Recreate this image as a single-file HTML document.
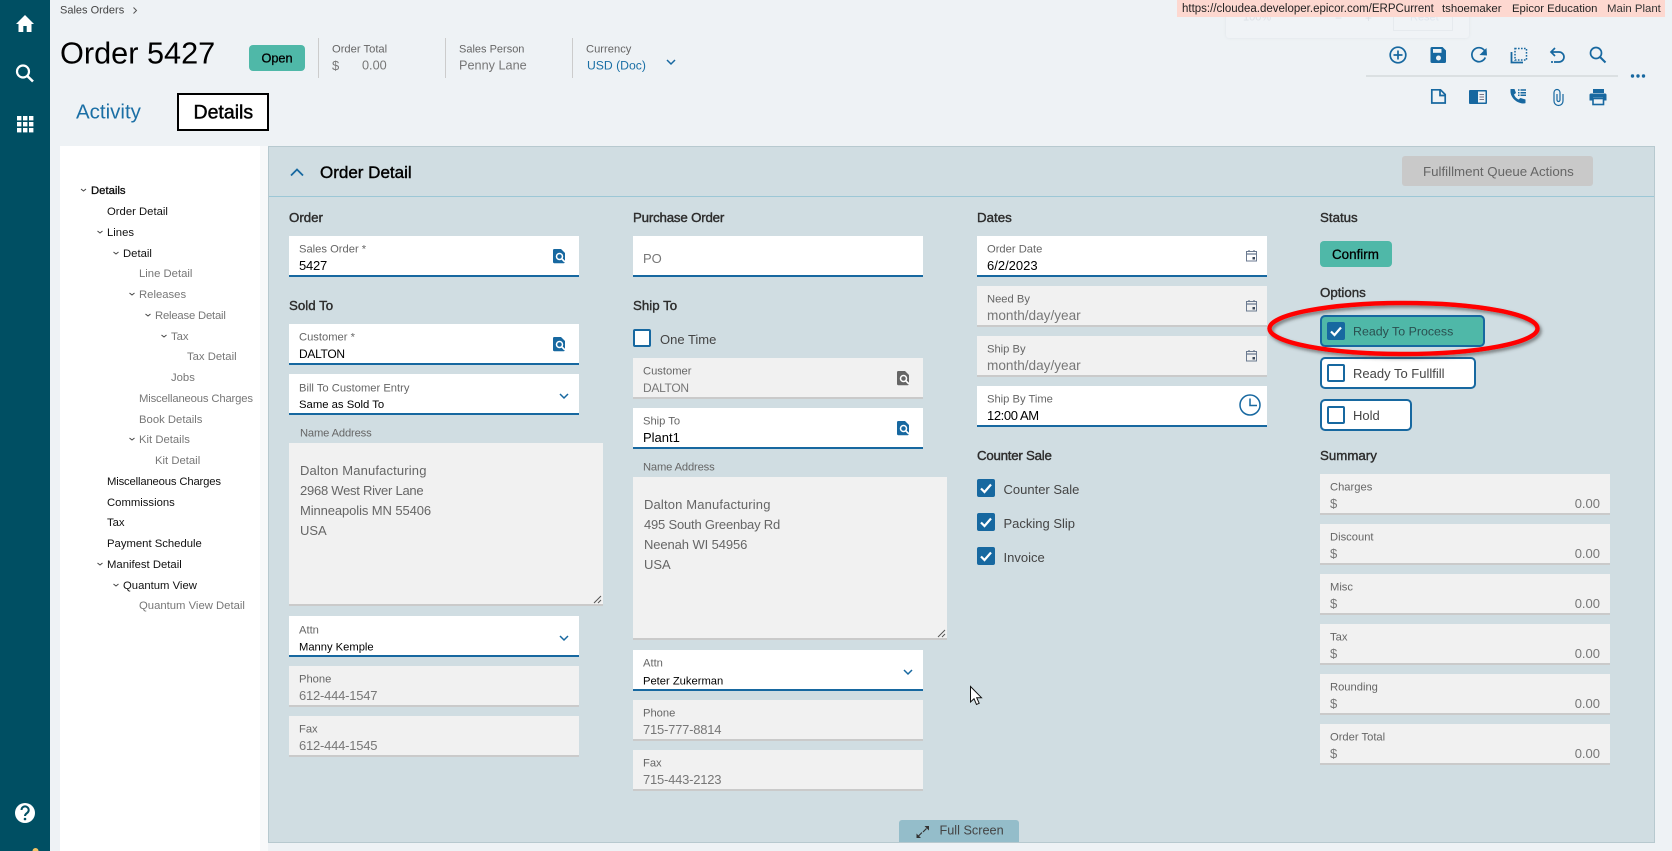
<!DOCTYPE html>
<html><head><meta charset="utf-8"><title>Order 5427</title>
<style>
*{box-sizing:border-box}
html,body{margin:0;padding:0}
body{width:1672px;height:851px;overflow:hidden;position:relative;background:#eef2f5;font-family:"Liberation Sans",sans-serif;color:#333}
.a{position:absolute}
.t{position:absolute;white-space:nowrap;transform:translateY(calc(-50% + 1px));line-height:1.2}
.l{font-size:11.2px;color:#666}
.v{font-size:13px;color:#777}
.k{color:#000}
.h{font-size:13.3px;color:#2d2d2d;-webkit-text-stroke:.4px #2d2d2d;margin-top:1px}
.n{font-size:11.3px;color:#111;margin-top:.7px}
.g{color:#777}
.f{position:absolute;width:290px;height:41px;background:#fff;border-bottom:2px solid #1768a0}
.d{background:#f1f1f1;border-bottom:2px solid #cacaca}
.f .t{left:10px}
.f .l{top:13px}
.f .v{top:29px}
.cb{position:absolute;width:18px;height:18px;border:2px solid #1768a0;border-radius:2px;background:#fff}
.on{background:#1768a0}
.cb svg{position:absolute;left:-2px;top:-2px}
.ta{position:absolute;width:314px;background:#f1f1f1;border-bottom:2px solid #cacaca}
.r{position:absolute;right:10px;left:auto!important;top:29px;font-size:13px;color:#777}
.op{position:absolute;height:32px;background:#fff;border:2px solid #1768a0;border-radius:5px}
.num{letter-spacing:-.22px}
.dal{font-size:12px!important;letter-spacing:-.3px}
.my{font-size:13.6px!important}
.dd{margin-top:1.5px;font-size:11.3px!important}
.ddl{margin-top:1px}
</style></head>
<body>
<div class="a" style="left:0;top:0;width:50px;height:851px;background:#004f63"></div>
<div class="a" style="left:60px;top:146px;width:200px;height:705px;background:#fff"></div>
<div class="a" style="left:260px;top:146px;width:8px;height:705px;background:#f8f9fa"></div>
<div class="a" style="left:268px;top:146px;width:1387px;height:697px;background:#d0dde2;border:1px solid #b7c9cf"></div>
<div class="a" style="left:269px;top:196px;width:1385px;height:1px;background:#9cc7d6"></div>

<div class="a" style="left:1226px;top:0;width:243px;height:38px;background:#f0f3f6;box-shadow:0 0 3px #dfe4e8;border-radius:3px"></div>
<div class="t" style="left:1243px;top:17px;font-size:11px;color:#dde1e6">100%</div>
<div class="t" style="left:1335px;top:17px;font-size:12px;color:#dde1e6">−</div>
<div class="t" style="left:1365px;top:17px;font-size:12px;color:#dde1e6">+</div>
<div class="a" style="left:1393px;top:4px;width:60px;height:27px;border:1px solid #e6eaee"></div>
<div class="t" style="left:1410px;top:17px;font-size:11px;color:#dfe6ee">Reset</div>
<div class="a" style="left:1177px;top:0;width:488px;height:17px;background:#fdd8d0"></div>
<div class="t" style="left:1182px;top:8.500px;font-size:11.5px;color:#222">https://cloudea.developer.epicor.com/ERPCurrent</div>
<div class="t" style="left:1442px;top:8.500px;font-size:11.4px;color:#222">tshoemaker</div>
<div class="t" style="left:1512px;top:8.500px;font-size:11.3px;color:#222">Epicor Education</div>
<div class="t" style="left:1607px;top:8.500px;font-size:11.4px;color:#333">Main Plant</div>

<div class="t" style="left:60px;top:10px;font-size:11px;color:#444">Sales Orders</div>
<div class="t" style="left:60px;top:53px;font-size:30.7px;color:#000">Order 5427</div>
<div class="a" style="left:249px;top:45px;width:56px;height:26px;background:#4fb8a8;border-radius:4px"></div>
<div class="t" style="left:261.500px;top:58px;font-size:12.7px;color:#000;-webkit-text-stroke:.3px #000">Open</div>
<div class="a" style="left:318px;top:38px;width:1px;height:40px;background:#ccc"></div>
<div class="a" style="left:445px;top:38px;width:1px;height:40px;background:#ccc"></div>
<div class="a" style="left:572px;top:38px;width:1px;height:40px;background:#ccc"></div>
<div class="t l" style="left:332px;top:49px">Order Total</div>
<div class="t v" style="left:332px;top:65px">$</div>
<div class="t v" style="left:362px;top:65px;font-size:12.7px">0.00</div>
<div class="t l" style="left:459px;top:49px;font-size:11px">Sales Person</div>
<div class="t v" style="left:459px;top:65px;font-size:12.7px">Penny Lane</div>
<div class="t l" style="left:586px;top:49px">Currency</div>
<div class="t v" style="left:587px;top:65px;color:#1a6fa5;font-size:12.200px">USD (Doc)</div>
<div class="t" style="left:76px;top:112px;font-size:20.500px;color:#1a6fa5">Activity</div>
<div class="a" style="left:177px;top:93px;width:92px;height:38px;border:2px solid #000;background:#fff"></div>
<div class="t" style="left:193.500px;top:112px;font-size:19.500px;color:#000;-webkit-text-stroke:.45px #000">Details</div>

<div class="t" style="left:320px;top:172px;font-size:17px;color:#000;-webkit-text-stroke:.4px #000">Order Detail</div>
<div class="a" style="left:1402px;top:156px;width:191px;height:30px;background:#c9c9c9;border-radius:3px"></div>
<div class="t" style="left:1423px;top:171px;font-size:13.3px;color:#666">Fulfillment Queue Actions</div>

<!-- tree -->
<div class="t n k" style="left:91px;top:190px;-webkit-text-stroke:.3px #000">Details</div>
<div class="t n" style="left:107px;top:211px">Order Detail</div>
<div class="t n" style="left:107px;top:232px">Lines</div>
<div class="t n" style="left:123px;top:253px">Detail</div>
<div class="t n g" style="left:139px;top:273px">Line Detail</div>
<div class="t n g" style="left:139px;top:294px">Releases</div>
<div class="t n g" style="left:155px;top:315px;letter-spacing:-.2px">Release Detail</div>
<div class="t n g" style="left:171px;top:336px">Tax</div>
<div class="t n g" style="left:187px;top:356px">Tax Detail</div>
<div class="t n g" style="left:171px;top:377px">Jobs</div>
<div class="t n g" style="left:139px;top:398px;letter-spacing:-.17px">Miscellaneous Charges</div>
<div class="t n g" style="left:139px;top:419px">Book Details</div>
<div class="t n g" style="left:139px;top:439px">Kit Details</div>
<div class="t n g" style="left:155px;top:460px">Kit Detail</div>
<div class="t n" style="left:107px;top:481px;letter-spacing:-.17px">Miscellaneous Charges</div>
<div class="t n" style="left:107px;top:502px">Commissions</div>
<div class="t n" style="left:107px;top:522px">Tax</div>
<div class="t n" style="left:107px;top:543px">Payment Schedule</div>
<div class="t n" style="left:107px;top:564px">Manifest Detail</div>
<div class="t n" style="left:123px;top:585px">Quantum View</div>
<div class="t n g" style="left:139px;top:605px">Quantum View Detail</div>

<!-- column 1 -->
<div class="t h" style="left:289px;top:216px">Order</div>
<div class="f" style="left:289px;top:236px"><div class="t l">Sales Order *</div><div class="t v k num">5427</div></div>
<div class="t h" style="left:289px;top:304px">Sold To</div>
<div class="f" style="left:289px;top:324px"><div class="t l">Customer *</div><div class="t v k dal">DALTON</div></div>
<div class="f" style="left:289px;top:374px"><div class="t l ddl">Bill To Customer Entry</div><div class="t v k dd">Same as Sold To</div></div>
<div class="t l" style="left:300px;top:433px;letter-spacing:-.15px">Name Address</div>
<div class="ta" style="left:289px;top:443px;height:163px"></div>
<div class="t v" style="left:300px;top:470px;color:#666;letter-spacing:.15px">Dalton Manufacturing</div>
<div class="t v" style="left:300px;top:490px;color:#666;letter-spacing:-.25px">2968 West River Lane</div>
<div class="t v" style="left:300px;top:510px;color:#666;letter-spacing:-.1px">Minneapolis MN 55406</div>
<div class="t v" style="left:300px;top:530px;color:#666">USA</div>
<div class="f" style="left:289px;top:616px"><div class="t l ddl">Attn</div><div class="t v k dd" style="font-size:11.200px!important">Manny Kemple</div></div>
<div class="f d" style="left:289px;top:666px"><div class="t l">Phone</div><div class="t v num">612-444-1547</div></div>
<div class="f d" style="left:289px;top:716px"><div class="t l">Fax</div><div class="t v num">612-444-1545</div></div>

<!-- column 2 -->
<div class="t h" style="left:633px;top:216px;letter-spacing:-.2px">Purchase Order</div>
<div class="f" style="left:633px;top:236px"><div class="t v" style="top:22px">PO</div></div>
<div class="t h" style="left:633px;top:304px">Ship To</div>
<div class="cb" style="left:633px;top:329px"></div>
<div class="t v" style="left:660px;top:339px;color:#444">One Time</div>
<div class="f d" style="left:633px;top:358px"><div class="t l">Customer</div><div class="t v dal">DALTON</div></div>
<div class="f" style="left:633px;top:408px"><div class="t l">Ship To</div><div class="t v k">Plant1</div></div>
<div class="t l" style="left:643px;top:467px;letter-spacing:-.15px">Name Address</div>
<div class="ta" style="left:633px;top:477px;height:163px"></div>
<div class="t v" style="left:644px;top:504px;color:#666;letter-spacing:.15px">Dalton Manufacturing</div>
<div class="t v" style="left:644px;top:524px;color:#666;letter-spacing:-.2px">495 South Greenbay Rd</div>
<div class="t v" style="left:644px;top:544px;color:#666;letter-spacing:-.1px">Neenah WI 54956</div>
<div class="t v" style="left:644px;top:564px;color:#666">USA</div>
<div class="f" style="left:633px;top:650px"><div class="t l">Attn</div><div class="t v k dd" style="font-size:11.200px!important">Peter Zukerman</div></div>
<div class="f d" style="left:633px;top:700px"><div class="t l">Phone</div><div class="t v num">715-777-8814</div></div>
<div class="f d" style="left:633px;top:750px"><div class="t l">Fax</div><div class="t v num">715-443-2123</div></div>

<!-- column 3 -->
<div class="t h" style="left:977px;top:216px">Dates</div>
<div class="f" style="left:977px;top:236px"><div class="t l">Order Date</div><div class="t v k">6/2/2023</div></div>
<div class="f d" style="left:977px;top:286px"><div class="t l">Need By</div><div class="t v my">month/day/year</div></div>
<div class="f d" style="left:977px;top:336px"><div class="t l">Ship By</div><div class="t v my">month/day/year</div></div>
<div class="f" style="left:977px;top:386px"><div class="t l">Ship By Time</div><div class="t v k" style="letter-spacing:-.4px">12:00 AM</div></div>
<div class="t h" style="left:977px;top:454px;letter-spacing:-.25px">Counter Sale</div>
<div class="cb on" style="left:977px;top:479px"><svg width="18" height="18"><path d="M4 9.5l3.5 3.5L14 5.5" fill="none" stroke="#fff" stroke-width="2.2"/></svg></div>
<div class="t v" style="left:1003.500px;top:489px;color:#444">Counter Sale</div>
<div class="cb on" style="left:977px;top:513px"><svg width="18" height="18"><path d="M4 9.5l3.5 3.5L14 5.5" fill="none" stroke="#fff" stroke-width="2.2"/></svg></div>
<div class="t v" style="left:1003.500px;top:523px;color:#444">Packing Slip</div>
<div class="cb on" style="left:977px;top:547px"><svg width="18" height="18"><path d="M4 9.5l3.5 3.5L14 5.5" fill="none" stroke="#fff" stroke-width="2.2"/></svg></div>
<div class="t v" style="left:1003.500px;top:557px;color:#444">Invoice</div>

<!-- column 4 -->
<div class="t h" style="left:1320px;top:216px">Status</div>
<div class="a" style="left:1320px;top:241px;width:72px;height:26px;background:#4fb8a8;border-radius:4px"></div>
<div class="t" style="left:1332px;top:254px;font-size:13.4px;color:#000;-webkit-text-stroke:.3px #000">Confirm</div>
<div class="t h" style="left:1320px;top:290.500px">Options</div>
<div class="op" style="left:1320px;top:315px;width:165px;background:#4fb8a8"></div>
<div class="cb on" style="left:1327px;top:322px"><svg width="18" height="18"><path d="M4 9.5l3.5 3.5L14 5.5" fill="none" stroke="#fff" stroke-width="2.2"/></svg></div>
<div class="t v" style="left:1353px;top:331px;color:#2a5050;font-size:12.400px">Ready To Process</div>
<div class="op" style="left:1320px;top:357px;width:156px"></div>
<div class="cb" style="left:1327px;top:364px"></div>
<div class="t v" style="left:1353px;top:373px;color:#444">Ready To Fullfill</div>
<div class="op" style="left:1320px;top:399px;width:92px"></div>
<div class="cb" style="left:1327px;top:406px"></div>
<div class="t v" style="left:1353px;top:415px;color:#444">Hold</div>
<div class="t h" style="left:1320px;top:454px">Summary</div>
<div class="f d" style="left:1320px;top:474px"><div class="t l">Charges</div><div class="t v">$</div><div class="t r">0.00</div></div>
<div class="f d" style="left:1320px;top:524px"><div class="t l">Discount</div><div class="t v">$</div><div class="t r">0.00</div></div>
<div class="f d" style="left:1320px;top:574px"><div class="t l">Misc</div><div class="t v">$</div><div class="t r">0.00</div></div>
<div class="f d" style="left:1320px;top:624px"><div class="t l">Tax</div><div class="t v">$</div><div class="t r">0.00</div></div>
<div class="f d" style="left:1320px;top:674px"><div class="t l">Rounding</div><div class="t v">$</div><div class="t r">0.00</div></div>
<div class="f d" style="left:1320px;top:724px"><div class="t l">Order Total</div><div class="t v">$</div><div class="t r">0.00</div></div>

<div class="a" style="left:899px;top:820px;width:120px;height:22px;background:#94bdca;border-radius:3px 3px 0 0"></div>
<div class="t" style="left:939.500px;top:830px;font-size:12.700px;color:#444">Full Screen</div>

<svg class="a" style="left:0;top:0" width="1672" height="851" viewBox="0 0 1672 851">
<defs>
<filter id="sh" x="-10%" y="-30%" width="120%" height="170%"><feDropShadow dx="2" dy="2.5" stdDeviation="1.5" flood-color="#444" flood-opacity=".6"/></filter>
<g id="lk"><path d="M0 1.2a1.2 1.2 0 0 1 1.2-1.2H8l4 4v9a1.2 1.2 0 0 1-1.2 1.2H1.2A1.2 1.2 0 0 1 0 13z"/><circle cx="6.5" cy="7.5" r="3" fill="none" stroke="#fff" stroke-width="1.5"/><path d="M8.7 9.7L12 13" stroke="#fff" stroke-width="1.7"/></g>
<g id="cal" fill="none" stroke="#6b7a90" stroke-width="1"><rect x=".5" y="1.5" width="10" height="9.5"/><path d="M.5 4h10M3 0v2M8 0v2" stroke-width="1.2"/><rect x="6.5" y="7" width="2.5" height="2.5" fill="#3d4a5c" stroke="none"/></g>
<path id="ch" d="M-4-2L0 2l4-4" fill="none" stroke="#1768a0" stroke-width="1.5"/>
<path id="tc" d="M-2.500-1L0 1l2.500-2" fill="none" stroke="#444" stroke-width="1"/>
</defs>
<!-- sidebar -->
<path d="M25 15L34 24h-2.5v8h-4.8v-6h-3.4v6h-4.8v-8H16z" fill="#fff"/>
<circle cx="23" cy="71.5" r="6" fill="none" stroke="#fff" stroke-width="2.2"/><path d="M27.3 76L33 81.5" stroke="#fff" stroke-width="2.6"/>
<g fill="#fff"><rect x="17" y="116" width="4.4" height="4.4"/><rect x="23" y="116" width="4.4" height="4.4"/><rect x="29" y="116" width="4.4" height="4.4"/><rect x="17" y="122" width="4.4" height="4.4"/><rect x="23" y="122" width="4.4" height="4.4"/><rect x="29" y="122" width="4.4" height="4.4"/><rect x="17" y="128" width="4.4" height="4.4"/><rect x="23" y="128" width="4.4" height="4.4"/><rect x="29" y="128" width="4.4" height="4.4"/></g>
<circle cx="25" cy="813" r="10" fill="#fff"/>
<path d="M21.5 810a3.6 3.6 0 1 1 5.6 3c-1.3.9-2.1 1.500-2.100 3" fill="none" stroke="#004f63" stroke-width="2"/><circle cx="25" cy="819" r="1.300" fill="#004f63"/>
<circle cx="35.500" cy="851" r="3" fill="#f2c265"/>
<!-- breadcrumb & header chevrons -->
<path d="M133.500 7.500L136.500 10.500L133.500 13.500" fill="none" stroke="#555" stroke-width="1"/>
<use href="#ch" x="671" y="62"/>
<path d="M291 175.500L297 169.500L303 175.500" fill="none" stroke="#1768a0" stroke-width="1.800"/>
<!-- toolbar -->
<g fill="none" stroke="#1768a0" stroke-width="1.700">
<circle cx="1398" cy="55" r="7.800"/><path d="M1398 50.500v9M1393.500 55h9"/>
<path d="M1484.500 50.500A7 7 0 1 0 1485.300 57.500"/>
<path d="M1515 48.500h11.500v11.500h-11.500z" stroke-dasharray="1.600 1.400" stroke-width="1.500"/>
<path d="M1511.500 52v10.500h11.500" stroke-width="1.800"/>
<path d="M1555 48l-4 4 4 4M1551.500 52h7.500a5 5 0 0 1 0 10h-5" />
<path d="M1553 62h-2" />
<circle cx="1596" cy="53" r="5.500"/><path d="M1600 57l5.500 5.500" stroke-width="2"/>
<path d="M1431.800 89.800h8.700l4.700 4.700v8.500h-13.400zM1440 89.800v5.700h5"/>
<path d="M1563 94v7a4.500 4.500 0 0 1-9 0V92.500a3 3 0 0 1 6 0V100a1.500 1.500 0 0 1-3 0V94" stroke-width="1.200"/>
</g>
<path d="M1486.500 48l.5 7.500-7.500-.5z" fill="#1768a0"/>
<path d="M1432 47h10.500L1446 50.500V61.500a1.500 1.500 0 0 1-1.500 1.500H1432a1.500 1.500 0 0 1-1.500-1.500V48.500A1.500 1.500 0 0 1 1432 47z" fill="#1768a0"/>
<rect x="1433" y="49" width="8.500" height="3.800" fill="#eef2f5"/><circle cx="1438.500" cy="58" r="2.500" fill="#eef2f5"/>
<rect x="1469" y="90" width="18" height="14" rx="1" fill="#1768a0"/><rect x="1478" y="91.500" width="7.500" height="11" fill="#eef2f5"/>
<path d="M1479.500 94.500h4.500M1479.500 97h4.500M1479.500 99.500h4.500" stroke="#778" stroke-width="1"/>
<path d="M1510.500 89h4l1.500 4-2 1.500c1 2.500 2.500 4 4.500 5l2-1.500 5 1.500v3.500c-.5.500-1.500.5-2.500.5-7.500-.5-13-7-12.500-13z" fill="#1768a0"/>
<path d="M1518 90h1.500M1520.500 90h5.500M1518 92.700h1.500M1520.500 92.700h5.500M1518 95.300h1.500M1520.500 95.300h5.500" stroke="#1768a0" stroke-width="1.500"/>
<rect x="1593" y="89" width="11" height="4" fill="#1768a0"/>
<path d="M1591 93.500h14a1.500 1.500 0 0 1 1.500 1.500v5.500h-3.500v-3h-10v3h-3.500V95a1.500 1.500 0 0 1 1.500-1.500z" fill="#1768a0"/>
<rect x="1593" y="98.500" width="10.500" height="6" fill="none" stroke="#1768a0" stroke-width="1.600"/>
<path d="M1366 76h252" stroke="#c8cdd0" stroke-width="1"/>
<g fill="#1768a0"><circle cx="1632.500" cy="76" r="1.700"/><circle cx="1638" cy="76" r="1.700"/><circle cx="1643.500" cy="76" r="1.700"/></g>
<!-- tree chevrons -->
<use href="#tc" x="83.500" y="190"/><use href="#tc" x="100" y="232"/><use href="#tc" x="116" y="253"/><use href="#tc" x="132" y="294"/><use href="#tc" x="148" y="315"/><use href="#tc" x="164" y="336"/><use href="#tc" x="132" y="439"/><use href="#tc" x="100" y="564"/><use href="#tc" x="116" y="585"/>
<!-- lookups -->
<use href="#lk" x="553" y="249" fill="#1768a0"/>
<use href="#lk" x="553" y="337" fill="#1768a0"/>
<use href="#lk" x="897" y="371" fill="#666"/>
<use href="#lk" x="897" y="421" fill="#1768a0"/>
<use href="#ch" x="564" y="396"/><use href="#ch" x="564" y="638"/><use href="#ch" x="908" y="672"/>
<!-- calendars -->
<use href="#cal" x="1246" y="250"/><use href="#cal" x="1246" y="300"/><use href="#cal" x="1246" y="350"/>
<circle cx="1250" cy="405" r="10" fill="none" stroke="#1768a0" stroke-width="1.500"/><path d="M1250 398.500v7h7" fill="none" stroke="#1768a0" stroke-width="1.500"/>
<!-- resize handles -->
<path d="M594 603l7-7M598 603l3-3M938 637l7-7M942 637l3-3" stroke="#555" stroke-width="1"/>
<!-- full screen icon -->
<path d="M923 832l3.500-3.500M922 832.500l-3.500 3.500" stroke="#333" stroke-width="1.200"/>
<path d="M924.500 826h4.500v4.500zM916.500 833.500v4.500h4.500z" fill="#333"/>
<!-- red ellipse -->
<ellipse cx="1403.500" cy="328.500" rx="134" ry="25.500" fill="none" stroke="#f00" stroke-width="4.500" filter="url(#sh)"/>
<!-- cursor -->
<path d="M970.500 686.500v15.500l3.500-3.300 2.500 5.800 2.700-1.200-2.500-5.600h4.800z" fill="#fff" stroke="#111" stroke-width="1"/>
</svg>
</body></html>
